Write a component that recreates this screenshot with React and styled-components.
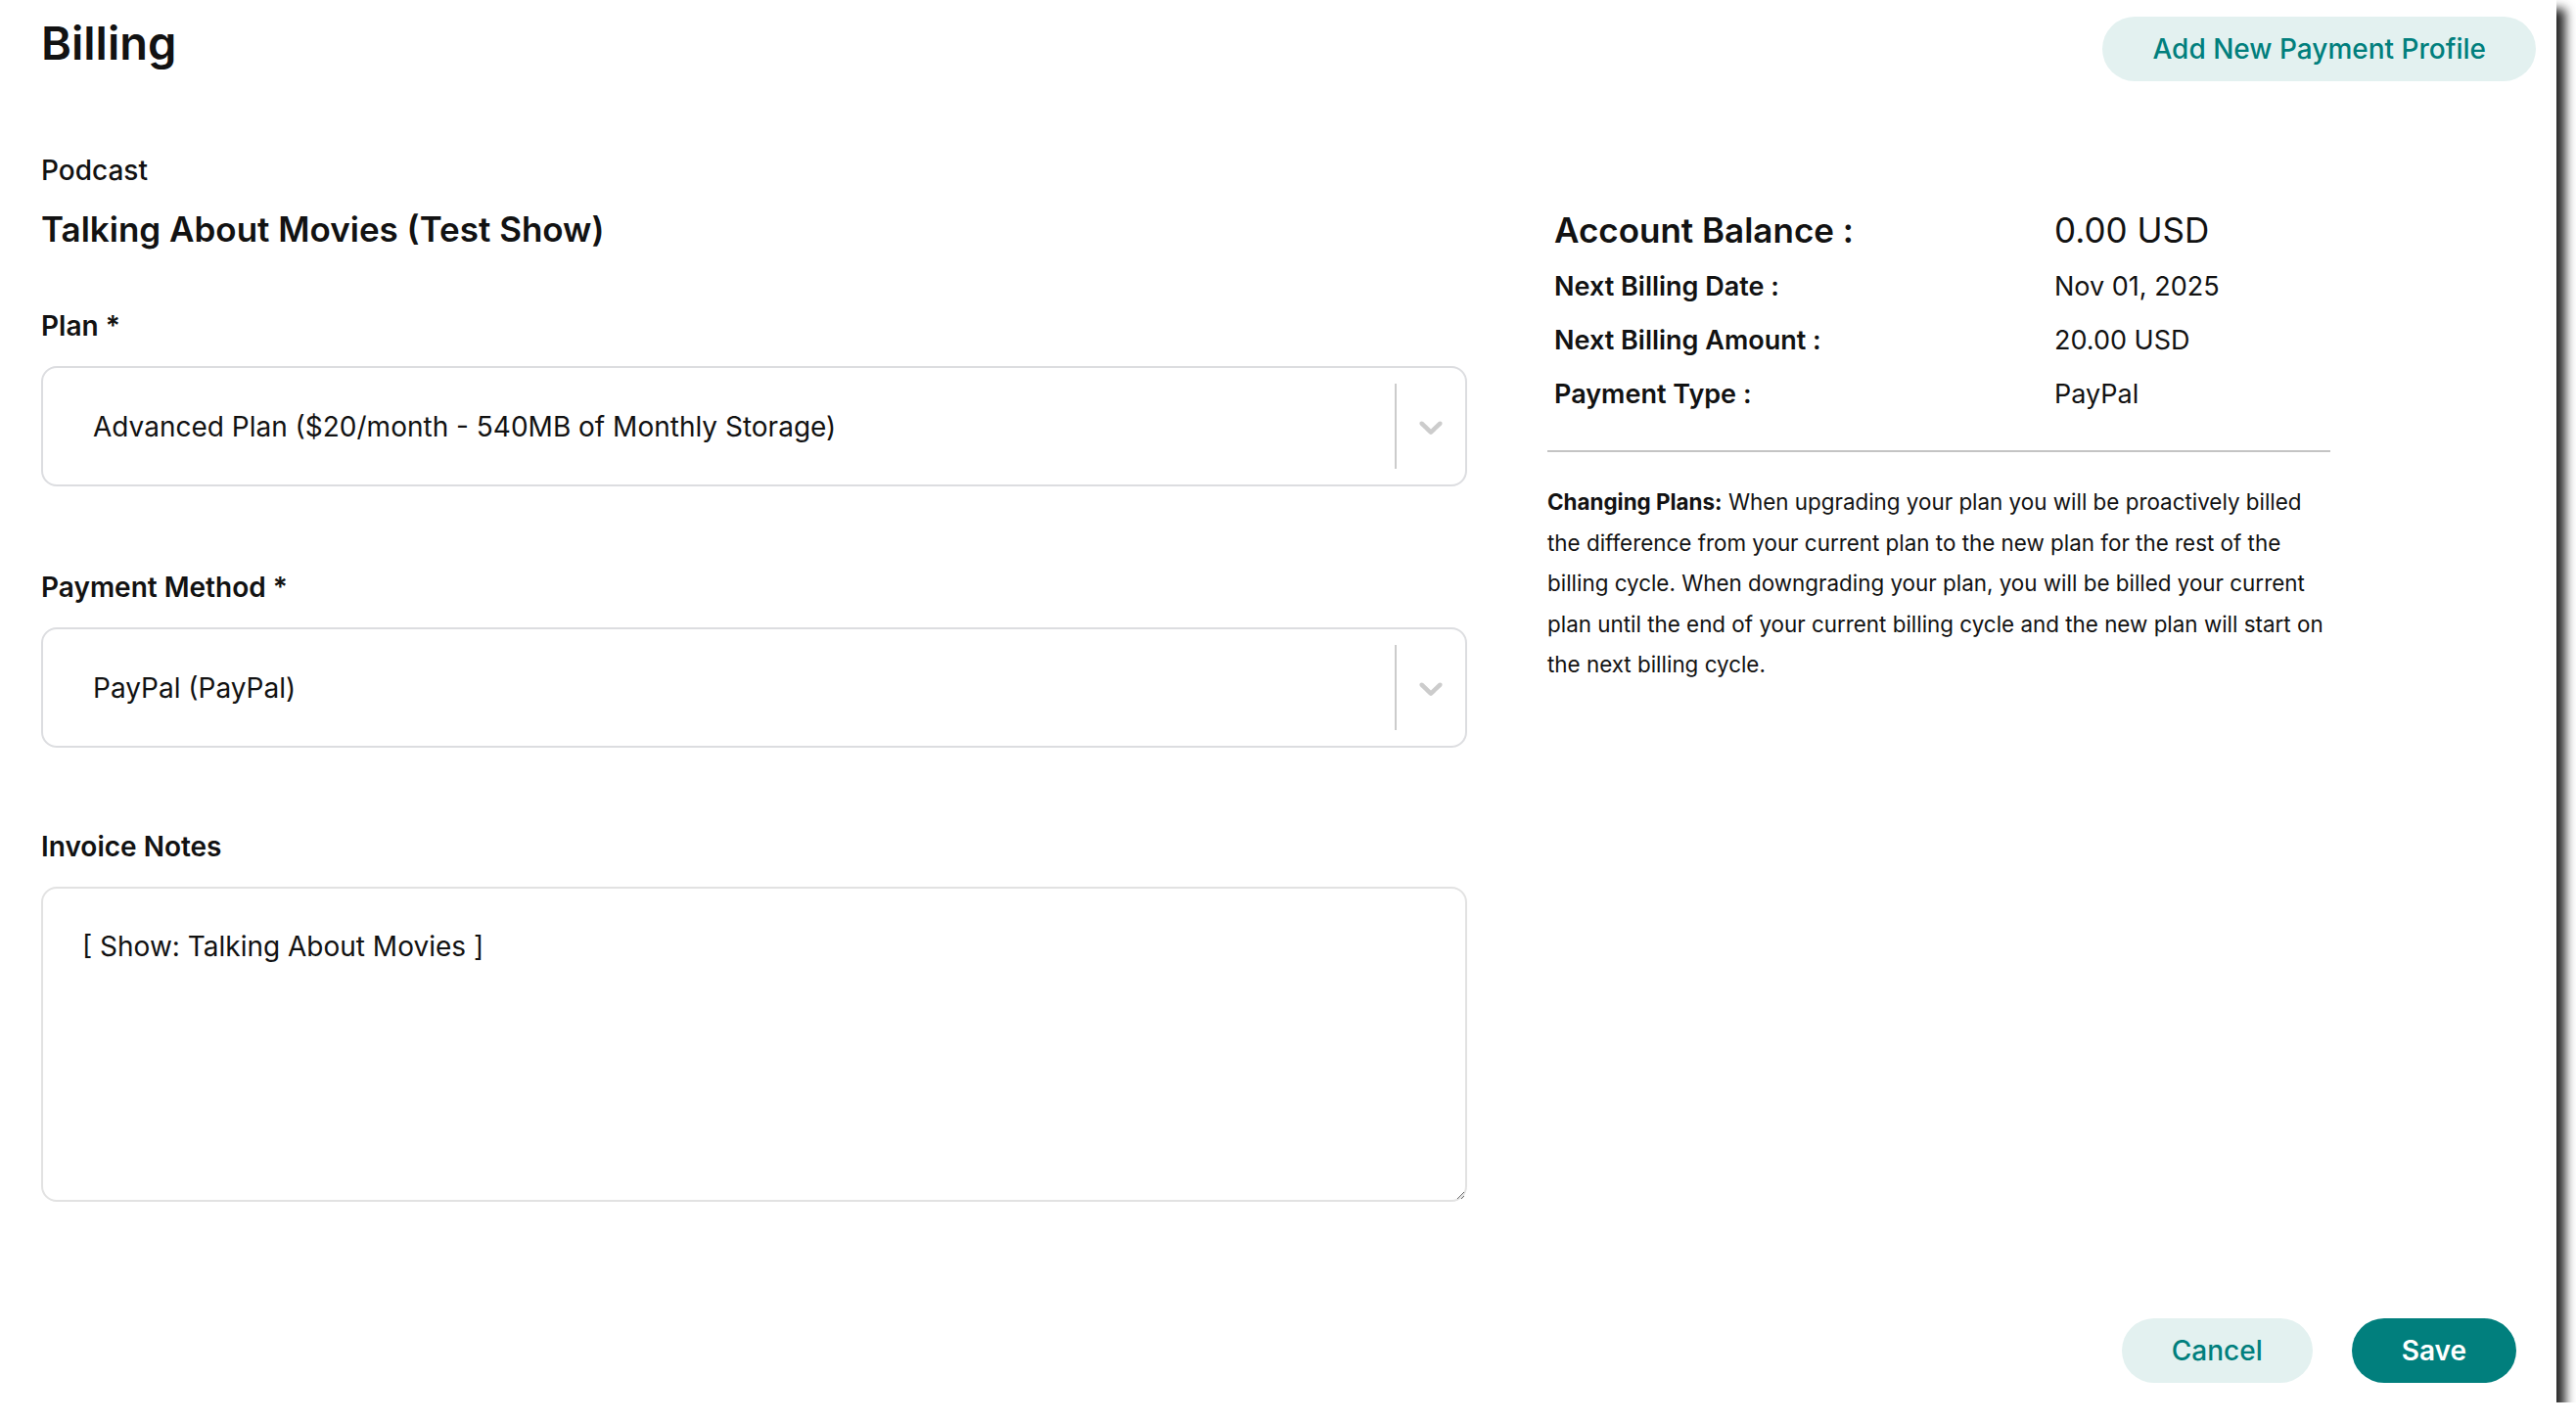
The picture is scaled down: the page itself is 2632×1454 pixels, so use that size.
// Billing settings page: podcast plan, payment method and invoice notes,
// with an account summary on the right.

import styled, { createGlobalStyle } from 'styled-components';

// ------------------------------
// Global styles
// ------------------------------

const GlobalStyle = createGlobalStyle`
  html, body {
    margin: 0;
    background: #ffffff;
  }
  body {
    font-family: Inter, "Noto Sans", "Liberation Sans", sans-serif;
    color: #121212;
  }
  * {
    box-sizing: border-box;
  }
`;

const TEAL = '#017f7d';
const TEAL_SOFT = '#e3f1f0';

// ------------------------------
// Styled components
// ------------------------------

const Panel = styled.main`
  display: flex;
  flex-direction: column;
  width: 2612px;
  height: 1433px;
  padding: 17px 21px 20px 42px;
  background: #ffffff;
  box-shadow: 9px 9px 10px rgba(0, 0, 0, 0.85);
`;

const Header = styled.header`
  display: flex;
  align-items: flex-start;
  justify-content: space-between;
`;

const Title = styled.h1`
  margin: -2px 0 0;
  font-size: 47px;
  line-height: normal;
  font-weight: 600;
`;

const PillButton = styled.button`
  height: 66px;
  padding: 0 51px;
  border: none;
  border-radius: 33px;
  font-family: inherit;
  font-size: 28px;
  font-weight: ${(p) => (p.$primary ? 600 : 500)};
  color: ${(p) => (p.$primary ? '#ffffff' : TEAL)};
  background: ${(p) => (p.$primary ? TEAL : TEAL_SOFT)};
  cursor: pointer;
`;

const Content = styled.section`
  display: grid;
  grid-template-columns: 1457px 800px;
  column-gap: 82px;
  margin-top: 76px;
`;

const FormColumn = styled.div`
  display: flex;
  flex-direction: column;
`;

const Eyebrow = styled.div`
  font-size: 28px;
  line-height: 30px;
  font-weight: 500;
`;

const ShowName = styled.h2`
  margin: 25px 0 0;
  font-size: 35px;
  line-height: 40px;
  font-weight: 600;
`;

const FieldLabel = styled.label`
  display: block;
  margin-top: ${(p) => p.$top}px;
  font-size: 28px;
  line-height: 30px;
  font-weight: 600;
`;

const SelectBox = styled.div`
  display: flex;
  align-items: center;
  height: 123px;
  margin-top: 26px;
  border: 2px solid #dcdde0;
  border-radius: 16px;
  background: #ffffff;
`;

const SelectValue = styled.div`
  flex: 1;
  padding-left: 51px;
  font-size: 28px;
  line-height: 32px;
`;

const Separator = styled.span`
  align-self: stretch;
  width: 2px;
  margin: 16px 0;
  background: #cccccc;
`;

const Indicator = styled.div`
  display: flex;
  align-items: center;
  justify-content: center;
  width: 70px;
  color: #cccccc;
`;

const Notes = styled.textarea`
  display: block;
  height: 322px;
  margin-top: 26px;
  padding: 39px 40px;
  border: 2px solid #e2e2e2;
  border-radius: 16px;
  font-family: inherit;
  font-size: 28px;
  line-height: 40px;
  color: #121212;
  resize: vertical;
  outline: none;
`;

const SummaryColumn = styled.aside`
  display: flex;
  flex-direction: column;
  padding-top: 46px;
`;

const SummaryRow = styled.div`
  display: grid;
  grid-template-columns: 511px 1fr;
  padding-left: 7px;
  font-size: ${(p) => (p.$large ? 35 : 27)}px;
  line-height: ${(p) => (p.$large ? 60 : 55)}px;
`;

const SummaryLabel = styled.span`
  font-weight: 600;
`;

const SummaryValue = styled.span`
  font-weight: 400;
`;

const Divider = styled.hr`
  width: 100%;
  height: 2px;
  margin: 30px 0 0;
  border: none;
  background: #c4c4c4;
`;

const Note = styled.p`
  margin: 30px 0 0;
  font-size: 22.4px;
  line-height: 41.6px;

  strong {
    font-weight: 700;
  }
`;

const Footer = styled.footer`
  display: flex;
  justify-content: flex-end;
  gap: 40px;
  margin-top: auto;
  padding-right: 20px;
`;

// ------------------------------
// Pieces
// ------------------------------

function Chevron() {
  return (
    <svg width="40" height="40" viewBox="0 0 20 20" fill="currentColor" aria-hidden="true">
      <path d="M4.516 7.548c0.436-0.446 1.043-0.481 1.576 0l3.908 3.747 3.908-3.747c0.533-0.481 1.141-0.446 1.574 0 0.436 0.445 0.408 1.197 0 1.615-0.406 0.418-4.695 4.502-4.695 4.502-0.217 0.223-0.502 0.335-0.787 0.335s-0.57-0.112-0.789-0.335c0 0-4.287-4.084-4.695-4.502s-0.436-1.17 0-1.615z" />
    </svg>
  );
}

function Select({ value }) {
  return (
    <SelectBox>
      <SelectValue>{value}</SelectValue>
      <Separator />
      <Indicator>
        <Chevron />
      </Indicator>
    </SelectBox>
  );
}

const summary = [
  { label: 'Next Billing Date :', value: 'Nov 01, 2025' },
  { label: 'Next Billing Amount :', value: '20.00 USD' },
  { label: 'Payment Type :', value: 'PayPal' },
];

// ------------------------------
// Component
// ------------------------------

export default function App() {
  return (
    <>
      <GlobalStyle />
      <Panel>
        <Header>
          <Title>Billing</Title>
          <PillButton>Add New Payment Profile</PillButton>
        </Header>

        <Content>
          <FormColumn>
            <Eyebrow>Podcast</Eyebrow>
            <ShowName>Talking About Movies (Test Show)</ShowName>

            <FieldLabel $top={64}>Plan *</FieldLabel>
            <Select value="Advanced Plan ($20/month - 540MB of Monthly Storage)" />

            <FieldLabel $top={88}>Payment Method *</FieldLabel>
            <Select value="PayPal (PayPal)" />

            <FieldLabel $top={86}>Invoice Notes</FieldLabel>
            <Notes defaultValue="[ Show: Talking About Movies ]" />
          </FormColumn>

          <SummaryColumn>
            <SummaryRow $large>
              <SummaryLabel>Account Balance :</SummaryLabel>
              <SummaryValue>0.00 USD</SummaryValue>
            </SummaryRow>
            {summary.map((row) => (
              <SummaryRow key={row.label}>
                <SummaryLabel>{row.label}</SummaryLabel>
                <SummaryValue>{row.value}</SummaryValue>
              </SummaryRow>
            ))}
            <Divider />
            <Note>
              <strong>Changing Plans:</strong> When upgrading your plan you will be
              proactively billed the difference from your current plan to the new plan
              for the rest of the billing cycle. When downgrading your plan, you will be
              billed your current plan until the end of your current billing cycle and
              the new plan will start on the next billing cycle.
            </Note>
          </SummaryColumn>
        </Content>

        <Footer>
          <PillButton>Cancel</PillButton>
          <PillButton $primary>Save</PillButton>
        </Footer>
      </Panel>
    </>
  );
}
